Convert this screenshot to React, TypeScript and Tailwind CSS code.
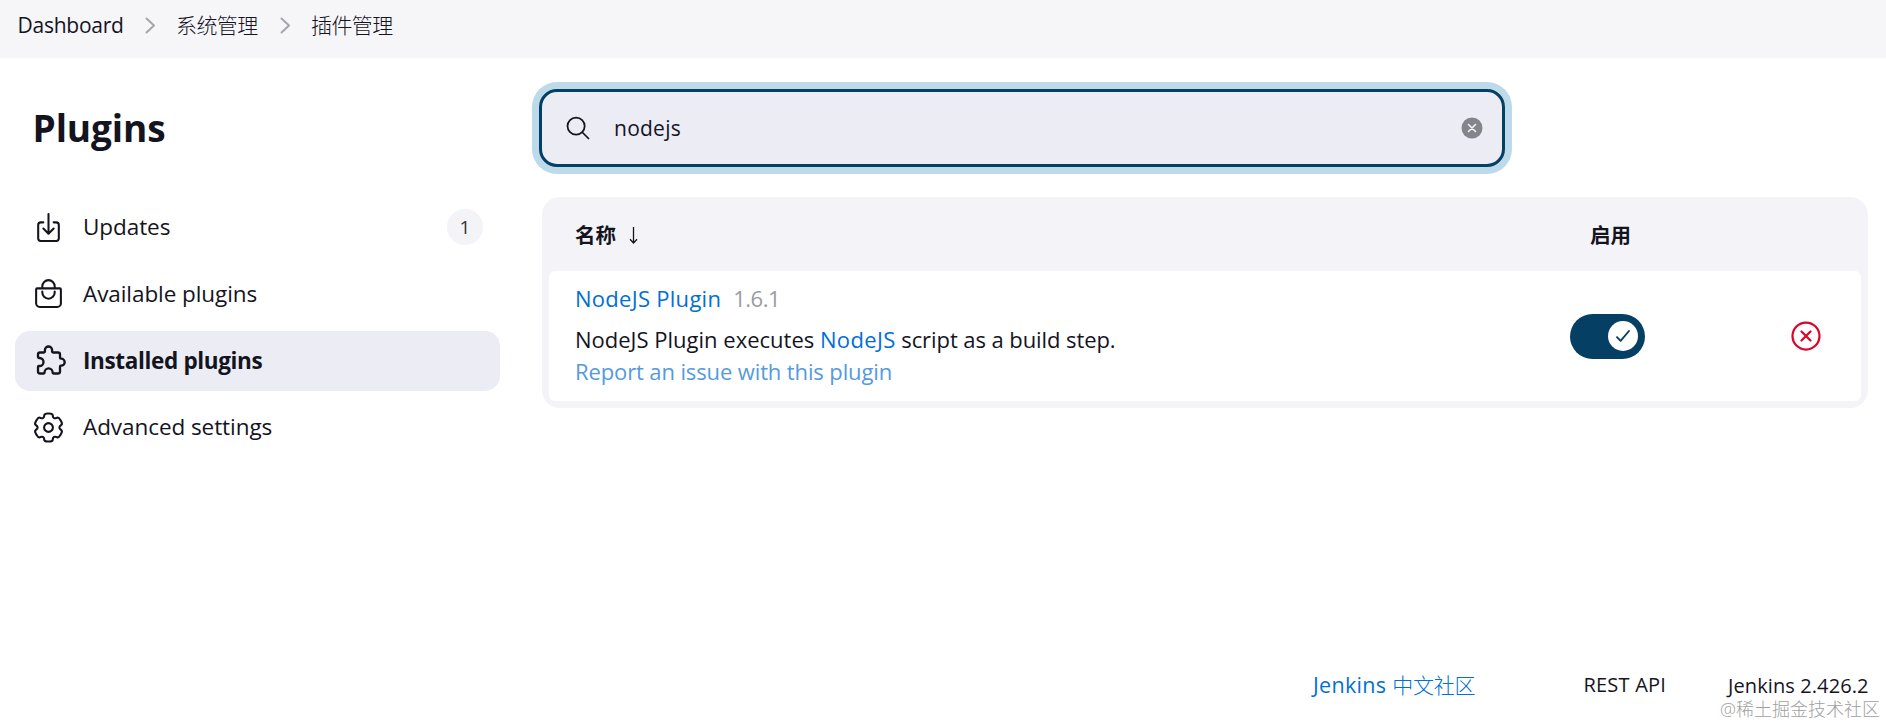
import type { ReactNode } from 'react';
import { IoBagHandleOutline, IoCloseCircleOutline, IoDownloadOutline, IoSearchOutline } from 'react-icons/io5';

function Chevron() {
  return (
    <svg viewBox="0 0 11 17" className="h-[17px] w-[11px] shrink-0" fill="none" stroke="#a5a5ab" strokeWidth="2">
      <path d="M1.5 1.5 L9 8.5 L1.5 15.5" strokeLinecap="round" strokeLinejoin="round" />
    </svg>
  );
}

function PuzzleIcon() {
  return (
    <svg
      viewBox="4 6.5 33 33"
      className="size-[33px] overflow-visible"
      fill="none"
      stroke="currentColor"
      strokeWidth="2.3"
      strokeLinejoin="round"
      strokeLinecap="round"
    >
      <path d="M12 15h3.9a1 1 0 0 0 1-1v-1.4a3.6 3.6 0 0 1 7.2 0V14a1 1 0 0 0 1 1H30a2 2 0 0 1 2 2v3.2a1 1 0 0 0 1 1h.2a3.5 3.5 0 0 1 0 7H33a1 1 0 0 0-1 1V34a2 2 0 0 1-2 2h-4.4a1 1 0 0 1-1-1v-.2a4 4 0 0 0-8 0v.2a1 1 0 0 1-1 1H12a2 2 0 0 1-2-2v-4.5a1 1 0 0 1 1-1h.5a4 4 0 0 0 0-8H11a1 1 0 0 1-1-1V17a2 2 0 0 1 2-2z" />
    </svg>
  );
}

// Six-lobed gear: each lobe has two outer corners followed by a valley, all rounded.
function gearPath(): string {
  const polar = (degrees: number, radius: number) => {
    const angle = (degrees * Math.PI) / 180;
    return [Math.cos(angle) * radius, Math.sin(angle) * radius];
  };
  const points: number[][] = [];
  for (let lobe = 0; lobe < 6; lobe++) {
    const centre = -90 + lobe * 60;
    points.push(polar(centre - 16, 14.6), polar(centre + 16, 14.6), polar(centre + 24, 11), polar(centre + 36, 11));
  }
  const toward = (from: number[], to: number[], share: number) =>
    [from[0] + (to[0] - from[0]) * share, from[1] + (to[1] - from[1]) * share].map((n) => n.toFixed(2)).join(' ');
  return (
    points
      .map((point, i) => {
        const previous = points[(i + points.length - 1) % points.length];
        const next = points[(i + 1) % points.length];
        return `${i === 0 ? 'M' : 'L'}${toward(point, previous, 0.42)}Q${point[0].toFixed(2)} ${point[1].toFixed(2)} ${toward(point, next, 0.42)}`;
      })
      .join('') + 'Z'
  );
}

function GearIcon() {
  return (
    <svg
      viewBox="-16.5 -16.5 33 33"
      className="size-[33px]"
      fill="none"
      stroke="currentColor"
      strokeWidth="2.1"
      strokeLinejoin="round"
    >
      <path d={gearPath()} />
      <circle r="4.4" />
    </svg>
  );
}

type NavItemProps = {
  icon: ReactNode;
  label: string;
  badge?: string;
  active?: boolean;
};

function NavItem({ icon, label, badge, active }: NavItemProps) {
  return (
    <li
      className={
        active
          ? 'flex h-[60px] items-center rounded-[15px] bg-[#ebecf4] px-[17px] font-bold tracking-[-0.35px]'
          : 'flex h-[60px] items-center px-[17px] tracking-[-0.07px]'
      }
    >
      <span className="mr-[18px] flex text-[33px]">{icon}</span>
      <span className="flex-1 text-[22.5px] leading-[30px]">{label}</span>
      {badge && (
        <span className="flex size-9 items-center justify-center rounded-full bg-[#f3f3f8] text-[19px] text-[#333338]">
          {badge}
        </span>
      )}
    </li>
  );
}

export default function App() {
  return (
    <div className="flex h-[723px] w-[1886px] flex-col overflow-hidden bg-white font-['Open_Sans','Noto_Sans_CJK_SC',sans-serif] text-[#14141f]">
      <nav className="flex h-[58px] items-center bg-[#f6f6f9] pb-[8px] pl-[17.5px] text-[21px] leading-[30px]">
        <span className="w-[127.5px] tracking-[-0.25px]">Dashboard</span>
        <Chevron />
        <span className="ml-[20px] w-[104px] font-light tracking-[-0.6px]">系统管理</span>
        <Chevron />
        <span className="ml-[20px] font-light tracking-[-0.6px]">插件管理</span>
      </nav>

      <div className="flex flex-1">
        <aside className="w-[539px] pl-[15px]">
          <h1 className="mt-[45px] ml-[17.5px] text-[37px] leading-[50px] font-bold tracking-[-0.1px]">Plugins</h1>
          <ul className="mt-[44.4px] flex w-[485px] flex-col gap-[6.6px]">
            <NavItem icon={<IoDownloadOutline />} label="Updates" badge="1" />
            <NavItem icon={<IoBagHandleOutline />} label="Available plugins" />
            <NavItem icon={<PuzzleIcon />} label="Installed plugins" active />
            <NavItem icon={<GearIcon />} label="Advanced settings" />
          </ul>
        </aside>

        <main className="flex-1">
          <div className="mt-[31px] flex h-[78px] w-[966px] items-center rounded-[18px] border-[3px] border-[#063f64] bg-[#ebecf4] px-[22px] shadow-[0_0_0_7px_#bddaea]">
            <IoSearchOutline className="size-[28px]" />
            <span className="ml-[22px] flex-1 text-[21px] leading-[30px] tracking-[0.25px]">nodejs</span>
            <svg viewBox="0 0 22 22" className="mr-[-3px] size-[22px]">
              <circle cx="11" cy="11" r="10.5" fill="#84848a" />
              <path d="M7.5 7.5 L14.5 14.5 M14.5 7.5 L7.5 14.5" stroke="#f4f4f8" strokeWidth="1.6" strokeLinecap="round" />
            </svg>
          </div>

          <div className="mt-[30px] ml-[3px] h-[211px] w-[1326px] rounded-[18px] bg-[#f4f4f8] px-[7px]">
            <div className="flex h-[74px] items-center pt-[2px] pl-[26px] text-[20.5px] font-bold">
              <span>名称</span>
              <svg viewBox="0 0 9 17" className="ml-[13px] h-[17px] w-[9px]" fill="none" stroke="#14141f" strokeWidth="1.3">
                <path d="M4.5 0 V16 M1 12.3 L4.5 16 L8 12.3" />
              </svg>
              <span className="ml-[952px]">启用</span>
            </div>
            <div className="flex h-[130px] rounded-[6px] bg-white pl-[26px]">
              <div className="w-[995px] pt-[11px] text-[22px]">
                <div className="flex gap-[12px] leading-[33px]">
                  <a className="tracking-[0.28px] text-[#006fd6]">NodeJS Plugin</a>
                  <span className="tracking-[-0.5px] text-[#9b9b9f]">1.6.1</span>
                </div>
                <p className="mt-[8px] leading-[33px]">
                  NodeJS Plugin executes{' '}
                  <a className="tracking-[0.35px] text-[#006fd6]">NodeJS</a>
                  <span className="tracking-[-0.08px]"> script as a build step.</span>
                </p>
                <a className="block leading-[31px] tracking-[-0.12px] text-[#549adf]">Report an issue with this plugin</a>
              </div>
              <div className="flex h-[130px] items-center">
                <div className="flex h-[45px] w-[75px] items-center justify-end rounded-full bg-[#063f64] pr-[7px]">
                  <span className="flex size-[30px] items-center justify-center rounded-full bg-white">
                    <svg viewBox="0 0 14 12" className="h-[12px] w-[14px]" fill="none" stroke="#063f64" strokeWidth="1.9">
                      <path d="M1 7.2 L4.6 10.8 L13 1" strokeLinecap="round" strokeLinejoin="round" />
                    </svg>
                  </span>
                </div>
                <IoCloseCircleOutline className="ml-[143px] size-[36px] text-[#d9062c]" />
              </div>
            </div>
          </div>
        </main>
      </div>

      <footer className="relative flex h-[60px] pl-[1313px] text-[20px] leading-[44px]">
        <a className="w-[270.5px] text-[21.5px] tracking-[0.3px] text-[#006fd6]">
          Jenkins <span className="text-[21px] font-light tracking-[-0.2px]">中文社区</span>
        </a>
        <span className="w-[144.5px] tracking-[0.2px]">REST API</span>
        <span className="pt-px tracking-[0.1px]">Jenkins 2.426.2</span>
        <span className="absolute right-[6px] bottom-[4px] text-[18px] leading-[20px] font-light text-[#a0a0a0]">
          @稀土掘金技术社区
        </span>
      </footer>
    </div>
  );
}
